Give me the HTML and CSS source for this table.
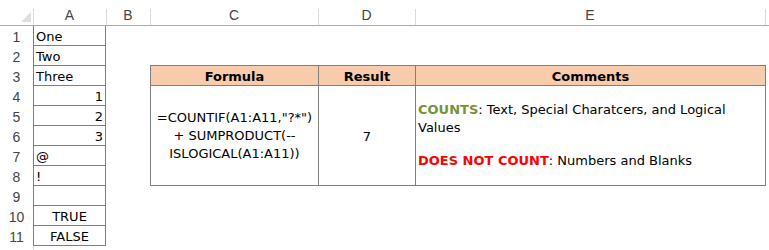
FILE: index.html
```html
<!DOCTYPE html>
<html>
<head>
<meta charset="utf-8">
<link rel="stylesheet" href="styles.css">
</head>
<body>
<div class="sheet">
  <div class="corner"><span class="tri"></span></div>
  <div class="colhead col-a">A</div>
  <div class="colhead">B</div>
  <div class="colhead">C</div>
  <div class="colhead">D</div>
  <div class="colhead">E</div>
  <div class="colhead last"></div>

  <div class="rn">1</div><div class="cell">One</div>
  <div class="rn">2</div><div class="cell">Two</div>
  <div class="rn">3</div><div class="cell">Three</div>
  <div class="rn">4</div><div class="cell num">1</div>
  <div class="rn">5</div><div class="cell num">2</div>
  <div class="rn">6</div><div class="cell num">3</div>
  <div class="rn">7</div><div class="cell">@</div>
  <div class="rn">8</div><div class="cell">!</div>
  <div class="rn">9</div><div class="cell"></div>
  <div class="rn">10</div><div class="cell center">TRUE</div>
  <div class="rn">11</div><div class="cell center">FALSE</div>
  <div class="rn-rest"></div>

  <div class="table">
    <div class="th">Formula</div>
    <div class="th">Result</div>
    <div class="th">Comments</div>
    <div class="td formula">=COUNTIF(A1:A11,"?*")<br>+ SUMPRODUCT(--<br>ISLOGICAL(A1:A11))</div>
    <div class="td result">7</div>
    <div class="td comments">
      <p><b class="green">COUNTS</b>: Text, Special Charatcers, and Logical Values</p>
      <p><b class="red">DOES NOT COUNT</b>: Numbers and Blanks</p>
    </div>
  </div>
</div>
</body>
</html>
```

FILE: styles.css
```css
html, body {
  margin: 0;
  padding: 0;
  background: #ffffff;
}
.sheet {
  display: grid;
  grid-template-columns: 33px 73px 44px 168px 97px 350px 1fr;
  grid-template-rows: 26px repeat(11, 20px) 1fr;
  height: 250px;
  font-family: "DejaVu Sans", Tahoma, sans-serif;
  font-size: 13px;
  color: #000;
}
.corner {
  grid-column: 1;
  grid-row: 1;
  border-bottom: 1px solid #ababab;
  position: relative;
}
.tri {
  position: absolute;
  right: 2px;
  bottom: 3px;
  width: 0;
  height: 0;
  border-left: 10px solid transparent;
  border-bottom: 10px solid #dfdfdf;
}
.colhead {
  grid-row: 1;
  border-bottom: 1px solid #ababab;
  font-family: "Liberation Sans", "Carlito", sans-serif;
  font-size: 14px;
  color: #444;
  display: flex;
  align-items: flex-end;
  justify-content: center;
  padding-bottom: 2px;
  box-sizing: border-box;
  background: linear-gradient(#dadada, #dadada) left 9px / 1px 16px no-repeat;
}
.col-a {
  grid-column: 2;
}
.rn {
  grid-column: 1;
  font-family: "Liberation Sans", sans-serif;
  font-size: 14px;
  color: #444;
  display: flex;
  align-items: center;
  justify-content: center;
  padding-top: 1px;
  box-sizing: border-box;
}
.rn-rest {
  grid-column: 1;
  grid-row: 13;
  border-right: 1px solid #dadada;
  margin-right: -1px;
}
.cell {
  grid-column: 2;
  border-left: 1px solid #7f7f7f;
  border-right: 1px solid #7f7f7f;
  border-bottom: 1px solid #7f7f7f;
  box-sizing: border-box;
  padding: 2px 2px 0 2px;
  display: flex;
  align-items: center;
  white-space: nowrap;
}
.cell.num {
  justify-content: flex-end;
}
.cell.center {
  justify-content: center;
}
.table {
  grid-column: 4 / 7;
  grid-row: 4 / 10;
  margin-top: -1px;
  margin-right: -1px;
  border: 1px solid #7f7f7f;
  display: grid;
  grid-template-columns: 168px 97px 1fr;
  grid-template-rows: 20px 1fr;
}
.th {
  background: #f8cbad;
  border-bottom: 1px solid #7f7f7f;
  border-right: 1px solid #7f7f7f;
  font-weight: bold;
  display: flex;
  align-items: center;
  justify-content: center;
  padding-top: 1px;
}
.th:nth-child(3), .td:nth-child(6) {
  border-right: none;
}
.td {
  border-right: 1px solid #7f7f7f;
}
.formula {
  display: flex;
  align-items: center;
  justify-content: center;
  text-align: center;
  line-height: 18px;
  padding-top: 1px;
}
.result {
  display: flex;
  align-items: center;
  justify-content: center;
  padding-top: 1px;
}
.comments {
  display: flex;
  flex-direction: column;
  justify-content: center;
  padding: 0 20px 0 2px;
  line-height: 18px;
}
.comments p {
  margin: 0;
}
.comments p + p {
  margin-top: 15px;
}
.green {
  color: #76933c;
}
.red {
  color: #ff0000;
}
```
